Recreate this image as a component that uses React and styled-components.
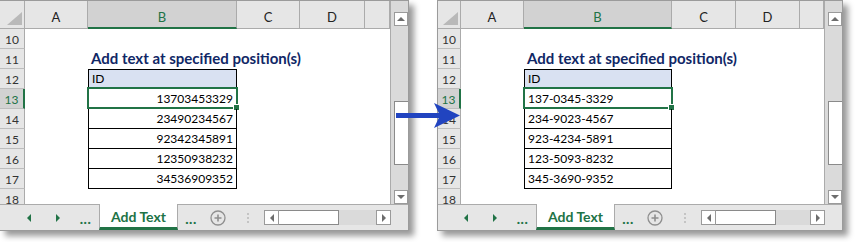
import React from 'react';
import styled, { createGlobalStyle } from 'styled-components';

const GREEN = '#217346';

const GlobalStyle = createGlobalStyle`
  html, body {
    margin: 0;
    padding: 0;
    background: #fff;
  }
  body {
    font-family: Lato, "Liberation Sans", sans-serif;
  }
`;

const Page = styled.div`
  position: relative;
  width: 855px;
  height: 242px;
  display: flex;
  align-items: flex-start;
  gap: 28px;
`;

const Window = styled.div`
  box-sizing: border-box;
  width: ${(p) => p.$width}px;
  margin-top: ${(p) => p.$top || 0}px;
  border: 1px solid #9b9b9b;
  border-left: ${(p) => (p.$noLeft ? 'none' : '1px solid #9b9b9b')};
  box-shadow: 5px 5px 6px rgba(0, 0, 0, 0.4);
  background: #e6e6e6;
  display: flex;
  flex-direction: column;
`;

const Body = styled.div`
  display: flex;
  height: 203px;
`;

const Sheet = styled.div`
  flex: 1;
  overflow: hidden;
  display: grid;
  grid-template-columns: ${(p) => p.$cols};
  grid-template-rows: 28px;
  grid-auto-rows: 20px;
  background: #fff;
  border-right: 1px solid #ababab;
`;

const ColHead = styled.div`
  box-sizing: border-box;
  position: relative;
  display: flex;
  align-items: center;
  justify-content: center;
  padding-top: 5px;
  background: ${(p) => (p.$sel ? '#d2d2d2' : '#e6e6e6')};
  border-right: 1px solid #ababab;
  border-bottom: ${(p) => (p.$sel ? `2px solid ${GREEN}` : '1px solid #ababab')};
  color: ${(p) => (p.$sel ? GREEN : '#222')};
  font-size: 13px;
`;

const Corner = styled.svg`
  position: absolute;
  right: 2px;
  bottom: 3px;
`;

const RowHead = styled.div`
  box-sizing: border-box;
  display: flex;
  align-items: center;
  justify-content: center;
  padding-top: 2px;
  background: ${(p) => (p.$sel ? '#d2d2d2' : '#e6e6e6')};
  border-right: ${(p) => (p.$sel ? `2px solid ${GREEN}` : '1px solid #ababab')};
  border-bottom: 1px solid #bdbdbd;
  color: ${(p) => (p.$sel ? GREEN : '#333')};
  font-size: 12px;
`;

const Cell = styled.div`
  box-sizing: border-box;
  position: relative;
  display: flex;
  align-items: flex-end;
  justify-content: ${(p) => (p.$right ? 'flex-end' : 'flex-start')};
  padding: 0 3px 2px;
  white-space: nowrap;
  font-size: 12px;
  color: #000;
  background: ${(p) => p.$fill || 'transparent'};
  border-left: ${(p) => (p.$boxed ? '1px solid #000' : 'none')};
  border-right: ${(p) => (p.$boxed ? '1px solid #000' : 'none')};
  border-bottom: ${(p) => (p.$boxed ? '1px solid #000' : 'none')};
  border-top: ${(p) => (p.$top ? '1px solid #000' : 'none')};
`;

const Title = styled.span`
  font-size: 15px;
  font-weight: 700;
  color: #102766;
  line-height: 18px;
  overflow: visible;
`;

const Selection = styled.span`
  position: absolute;
  left: -2px;
  right: -2px;
  top: -2px;
  bottom: -1px;
  border: 2px solid ${GREEN};
  pointer-events: none;
`;

const Handle = styled.span`
  position: absolute;
  right: -4px;
  bottom: -4px;
  width: 5px;
  height: 5px;
  background: ${GREEN};
  border: 1px solid #fff;
`;

const VScroll = styled.div`
  width: 17px;
  display: flex;
  flex-direction: column;
  align-items: flex-end;
  background: #dadada;
`;

const ArrowBox = styled.div`
  box-sizing: border-box;
  width: ${(p) => p.$w || 14}px;
  height: ${(p) => p.$h || 14}px;
  margin-top: ${(p) => p.$mt || 0}px;
  background: #fff;
  border: 1px solid #9a9a9a;
  display: flex;
  align-items: center;
  justify-content: center;
  flex-shrink: 0;
`;

const Track = styled.div`
  flex: 1;
`;

const VThumb = styled.div`
  box-sizing: border-box;
  width: 14px;
  height: 64px;
  margin-top: 75px;
  background: #fff;
  border: 1px solid #8a8a8a;
  border-right: none;
`;

const TabBar = styled.div`
  box-sizing: border-box;
  height: 26px;
  display: flex;
  align-items: stretch;
  padding-left: ${(p) => p.$pad}px;
  border-top: 1px solid #ababab;
  background: #e6e6e6;
`;

const Slot = styled.div`
  width: ${(p) => p.$w}px;
  display: flex;
  align-items: center;
  justify-content: center;
  flex-shrink: 0;
`;

const Dots = styled.span`
  color: ${GREEN};
  font-weight: 900;
  font-size: 14px;
  letter-spacing: 0.5px;
  padding-top: 2px;
`;

const Tab = styled.div`
  box-sizing: border-box;
  width: 79px;
  margin-top: -1px;
  display: flex;
  align-items: center;
  justify-content: center;
  background: #fff;
  border-left: 1px solid #ababab;
  border-right: 1px solid #ababab;
  border-bottom: 3px solid ${GREEN};
  color: ${GREEN};
  font-weight: 700;
  font-size: 14px;
  padding-top: 2px;
`;

const HScroll = styled.div`
  width: ${(p) => p.$w}px;
  height: 15px;
  align-self: center;
  display: flex;
  background: #dadada;
`;

const HThumb = styled.div`
  box-sizing: border-box;
  width: 60px;
  background: #fff;
  border: 1px solid #8a8a8a;
  border-left: none;
`;

const ArrowOverlay = styled.svg`
  position: absolute;
  left: 396px;
  top: 102px;
`;

const Tri = ({ dir, color = '#6d6d6d', size = 4 }) => {
  const s = size;
  const pts = {
    up: `0,${s} ${s},0 ${s * 2},${s}`,
    down: `0,0 ${s},${s} ${s * 2},0`,
    left: `${s},0 0,${s} ${s},${s * 2}`,
    right: `0,0 ${s},${s} 0,${s * 2}`,
  }[dir];
  const horiz = dir === 'left' || dir === 'right';
  return (
    <svg width={horiz ? s : s * 2} height={horiz ? s * 2 : s}>
      <polygon points={pts} fill={color} />
    </svg>
  );
};

const COLS = ['A', 'B', 'C', 'D', ''];

const Spreadsheet = ({ width, noLeft, cols, pad, hw, values, right, top }) => (
  <Window $width={width} $noLeft={noLeft} $top={top}>
    <Body>
      <Sheet $cols={cols}>
        <ColHead>
          <Corner width="15" height="13">
            <polygon points="0,13 15,13 15,0" fill="#b9b9b9" />
          </Corner>
        </ColHead>
        {COLS.map((c, i) => (
          <ColHead key={i} $sel={c === 'B'}>
            {c}
          </ColHead>
        ))}
        {[10, 11, 12, 13, 14, 15, 16, 17, 18].map((r) => {
          const idx = r - 13;
          return (
            <React.Fragment key={r}>
              <RowHead $sel={r === 13}>{r}</RowHead>
              <Cell />
              {r === 11 && (
                <Cell>
                  <Title>Add text at specified position(s)</Title>
                </Cell>
              )}
              {r === 12 && (
                <Cell $boxed $top $fill="#d9e1f2">
                  ID
                </Cell>
              )}
              {r >= 13 && r <= 17 && (
                <Cell $boxed $right={right}>
                  {values[idx]}
                  {r === 13 && (
                    <Selection>
                      <Handle />
                    </Selection>
                  )}
                </Cell>
              )}
              {(r === 10 || r === 18) && <Cell />}
              <Cell />
              <Cell />
              <Cell />
            </React.Fragment>
          );
        })}
      </Sheet>
      <VScroll>
        <ArrowBox $mt={11}>
          <Tri dir="up" size={4} />
        </ArrowBox>
        <Track>
          <VThumb />
        </Track>
        <ArrowBox>
          <Tri dir="down" size={4} />
        </ArrowBox>
      </VScroll>
    </Body>
    <TabBar $pad={pad}>
      <Slot $w={29}>
        <Tri dir="left" color={GREEN} size={4} />
      </Slot>
      <Slot $w={29}>
        <Tri dir="right" color={GREEN} size={4} />
      </Slot>
      <Slot $w={27}>
        <Dots>...</Dots>
      </Slot>
      <Tab>Add Text</Tab>
      <Slot $w={26}>
        <Dots>...</Dots>
      </Slot>
      <Slot $w={28}>
        <svg width="16" height="16" viewBox="0 0 16 16">
          <circle cx="8" cy="8" r="7" fill="none" stroke="#8f8f8f" strokeWidth="1.3" />
          <path d="M8 4.5v7M4.5 8h7" stroke="#8f8f8f" strokeWidth="1.6" />
        </svg>
      </Slot>
      <Slot $w={32}>
        <svg width="2" height="12">
          <rect x="0" y="1" width="2" height="2" fill="#c4c4c4" />
          <rect x="0" y="5" width="2" height="2" fill="#c4c4c4" />
          <rect x="0" y="9" width="2" height="2" fill="#c4c4c4" />
        </svg>
      </Slot>
      <HScroll $w={hw}>
        <ArrowBox $w={15} $h={15}>
          <Tri dir="left" size={4} />
        </ArrowBox>
        <HThumb />
        <Track />
        <ArrowBox $w={15} $h={15}>
          <Tri dir="right" size={4} />
        </ArrowBox>
      </HScroll>
    </TabBar>
  </Window>
);

const before = ['13703453329', '23490234567', '92342345891', '12350938232', '34536909352'];
const after = ['137-0345-3329', '234-9023-4567', '923-4234-5891', '123-5093-8232', '345-3690-9352'];

const App = () => (
  <Page>
    <GlobalStyle />
    <Spreadsheet
      width={409}
      noLeft
      cols="25px 63px 149px 63px 65px 1fr"
      pad={14}
      hw={127}
      values={before}
      right
    />
    <Spreadsheet
      width={406}
      cols="23px 63px 148px 64px 64px 1fr"
      pad={13}
      hw={124}
      values={after}
    />
    <ArrowOverlay width="66" height="28" viewBox="0 0 66 28">
      <rect x="0" y="11" width="46" height="5" fill="#2144c0" />
      <polygon points="38,1 64,13.5 38,26 44,13.5" fill="#2144c0" />
    </ArrowOverlay>
  </Page>
);

export default App;
